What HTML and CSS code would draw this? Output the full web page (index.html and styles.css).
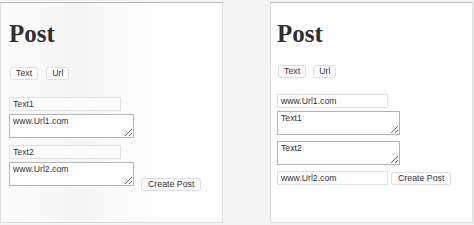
FILE: index.html
```html
<!DOCTYPE html>
<html>
<head>
<meta charset="utf-8">
<link rel="stylesheet" href="styles.css">
</head>
<body>
<div class="page">
  <section class="panel panel-a">
    <h1 class="title">Post</h1>
    <div class="tabs">
      <button class="btn">Text</button>
      <button class="btn">Url</button>
    </div>
    <div class="form form-a">
      <input class="field" value="Text1">
      <textarea class="area">www.Url1.com</textarea>
      <input class="field gap-lg" value="Text2">
      <div class="row row-bottom">
        <textarea class="area">www.Url2.com</textarea>
        <button class="btn btn-submit">Create Post</button>
      </div>
    </div>
  </section>
  <section class="panel panel-b">
    <h1 class="title">Post</h1>
    <div class="tabs">
      <button class="btn">Text</button>
      <button class="btn">Url</button>
    </div>
    <div class="form form-b">
      <input class="field" value="www.Url1.com">
      <textarea class="area">Text1</textarea>
      <textarea class="area gap-md">Text2</textarea>
      <div class="row row-center gap-md">
        <input class="field" value="www.Url2.com">
        <button class="btn btn-submit">Create Post</button>
      </div>
    </div>
  </section>
</div>
</body>
</html>
```
FILE: styles.css
```css
* { box-sizing: border-box; }
html, body { margin: 0; padding: 0; }
body {
  background: #f4f4f4;
  width: 474px;
  height: 225px;
  overflow: hidden;
  font-family: "Liberation Sans", Arial, sans-serif;
  color: #333;
}
.page {
  display: flex;
  gap: 47px;
  padding-top: 2px;
}
.panel {
  height: 221px;
  background: #fff;
  border: 1px solid #dcdcdc;
  border-top-color: #b9b9b9;
  display: flex;
  flex-direction: column;
  padding-top: 18px;
}
.panel-a {
  width: 223px;
  padding-left: 8px;
  background: linear-gradient(90deg, #fdfdfd 0%, #f8f8f8 22%, #f4f4f4 36%, #fcfcfc 55%, #fff 75%);
}
.panel-b {
  width: 203px;
  padding-left: 6px;
}
.title {
  margin: 0;
  font-family: "Liberation Serif", "Times New Roman", serif;
  font-weight: bold;
  font-size: 25px;
  line-height: 25px;
  color: #2f2f2f;
}
.tabs {
  display: flex;
  gap: 8px;
  margin-top: 21px;
  padding-left: 1px;
}
.panel-b .tabs { margin-top: 19px; gap: 7px; }
.btn {
  height: 13px;
  padding: 0 5px;
  font-family: "Liberation Sans", Arial, sans-serif;
  font-size: 8.8px;
  line-height: 11px;
  color: #333;
  background: #fff;
  border: 1px solid #dedede;
  border-radius: 3px;
}
.btn-submit {
  padding: 0 6px;
  height: 13px;
}
.form {
  display: flex;
  flex-direction: column;
  align-items: flex-start;
}
.form-a { margin-top: 17px; }
.form-b { margin-top: 16px; }
.field {
  width: 112px;
  height: 14px;
  margin: 0;
  padding: 0 3px;
  font-family: "Liberation Sans", Arial, sans-serif;
  font-size: 8.7px;
  color: #333;
  background: #fff;
  border: 1px solid #e0e0e0;
  border-radius: 0;
  outline: none;
}
.area {
  width: 125px;
  height: 24px;
  margin: 3px 0 0;
  padding: 1px 3px;
  font-family: "Liberation Sans", Arial, sans-serif;
  font-size: 8.7px;
  line-height: 10px;
  color: #333;
  background: #fff;
  border: 1px solid #b4b4b4;
  border-radius: 0;
  outline: none;
  display: block;
}
.gap-lg { margin-top: 7px; }
.gap-md { margin-top: 6px; }
.row {
  display: flex;
  gap: 7px;
}
.row-bottom { align-items: flex-end; }
.row-bottom .btn-submit { margin-bottom: -5px; }
.row-center { align-items: center; gap: 3px; }
.panel-b .field { width: 111px; }
.panel-b .area { width: 123px; height: 24px; }
```
